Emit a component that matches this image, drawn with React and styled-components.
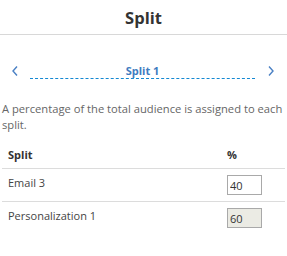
import React from 'react'
import styled, { createGlobalStyle } from 'styled-components'

const GlobalStyle = createGlobalStyle`
  body {
    margin: 0;
    background: #fff;
    font-family: "Open Sans", "DejaVu Sans", sans-serif;
  }
`
const Panel = styled('div')`
  width: 287px;
  height: 256px;
  overflow: hidden;
  background: #fff;
`
const Header = styled('div')`
  height: 34px;
  border-bottom: 1px solid #d8d8d8;
  display: flex;
  align-items: center;
  justify-content: center;
`
const Title = styled('h1')`
  margin: 0;
  font-size: 16.5px;
  font-weight: 700;
  color: #333;
`
const Nav = styled('div')`
  display: flex;
  align-items: center;
  justify-content: space-between;
  padding: 0 12px 0 11px;
  margin-top: 26px;
  height: 20px;
`
const Arrow = styled('button')`
  border: none;
  background: none;
  padding: 0;
  width: 8px;
  height: 12px;
  display: flex;
  color: #4a80c4;
  cursor: pointer;
`
const Label = styled('div')`
  flex: 1;
  margin: 0 12px 0 11px;
  text-align: center;
  font-size: 11px;
  font-weight: 700;
  color: #3f7cbf;
  line-height: 15px;
  border-bottom: 1px dashed #1488d2;
`
const Description = styled('p')`
  margin: 20px 0 0;
  padding: 0 2px;
  font-size: 11.2px;
  line-height: 16px;
  color: #666;
`
const Table = styled('table')`
  margin: 7px 2px 0;
  width: 283px;
  border-collapse: collapse;
  font-size: 11px;
  color: #444;
`
const Th = styled('th')`
  text-align: left;
  font-weight: 700;
  color: #333;
  padding: 0 0 0 6px;
  height: 28px;
  border-bottom: 1px solid #dcdcdc;
  width: ${p => p.$w || 'auto'};
`
const Td = styled('td')`
  padding: 0 0 0 6px;
  height: 32px;
  border-bottom: ${p => (p.$last ? 'none' : '1px solid #dcdcdc')};
  vertical-align: top;
`
const Name = styled('div')`
  padding-top: 6px;
  line-height: 16px;
`
const Percent = styled('input')`
  box-sizing: border-box;
  width: 35px;
  height: 20px;
  margin-top: 6px;
  padding: 1px 2px;
  border: 1px solid #a9a9a9;
  border-radius: 0;
  font-family: "Open Sans", sans-serif;
  font-size: 11px;
  color: #333;
  background: ${p => (p.disabled ? '#ebebe4' : '#fff')};
`

const Chevron = ({ dir }) => (
  <svg width="8" height="12" viewBox="0 0 8 12">
    <path
      d={dir === 'left' ? 'M6 1.5 L2 6 L6 10.5' : 'M2 1.5 L6 6 L2 10.5'}
      fill="none"
      stroke="currentColor"
      strokeWidth="1.4"
    />
  </svg>
)

const rows = [
  { name: 'Email 3', value: '40' },
  { name: 'Personalization 1', value: '60', locked: true },
]

export default function App() {
  return (
    <Panel>
      <GlobalStyle />
      <Header>
        <Title>Split</Title>
      </Header>
      <Nav>
        <Arrow aria-label="Previous"><Chevron dir="left" /></Arrow>
        <Label>Split 1</Label>
        <Arrow aria-label="Next"><Chevron dir="right" /></Arrow>
      </Nav>
      <Description>A percentage of the total audience is assigned to each split.</Description>
      <Table>
        <thead>
          <tr>
            <Th>Split</Th>
            <Th $w="58px">%</Th>
          </tr>
        </thead>
        <tbody>
          {rows.map((r, i) => (
            <tr key={r.name}>
              <Td $last={i === rows.length - 1}><Name>{r.name}</Name></Td>
              <Td $last={i === rows.length - 1}>
                <Percent defaultValue={r.value} disabled={r.locked} />
              </Td>
            </tr>
          ))}
        </tbody>
      </Table>
    </Panel>
  )
}
